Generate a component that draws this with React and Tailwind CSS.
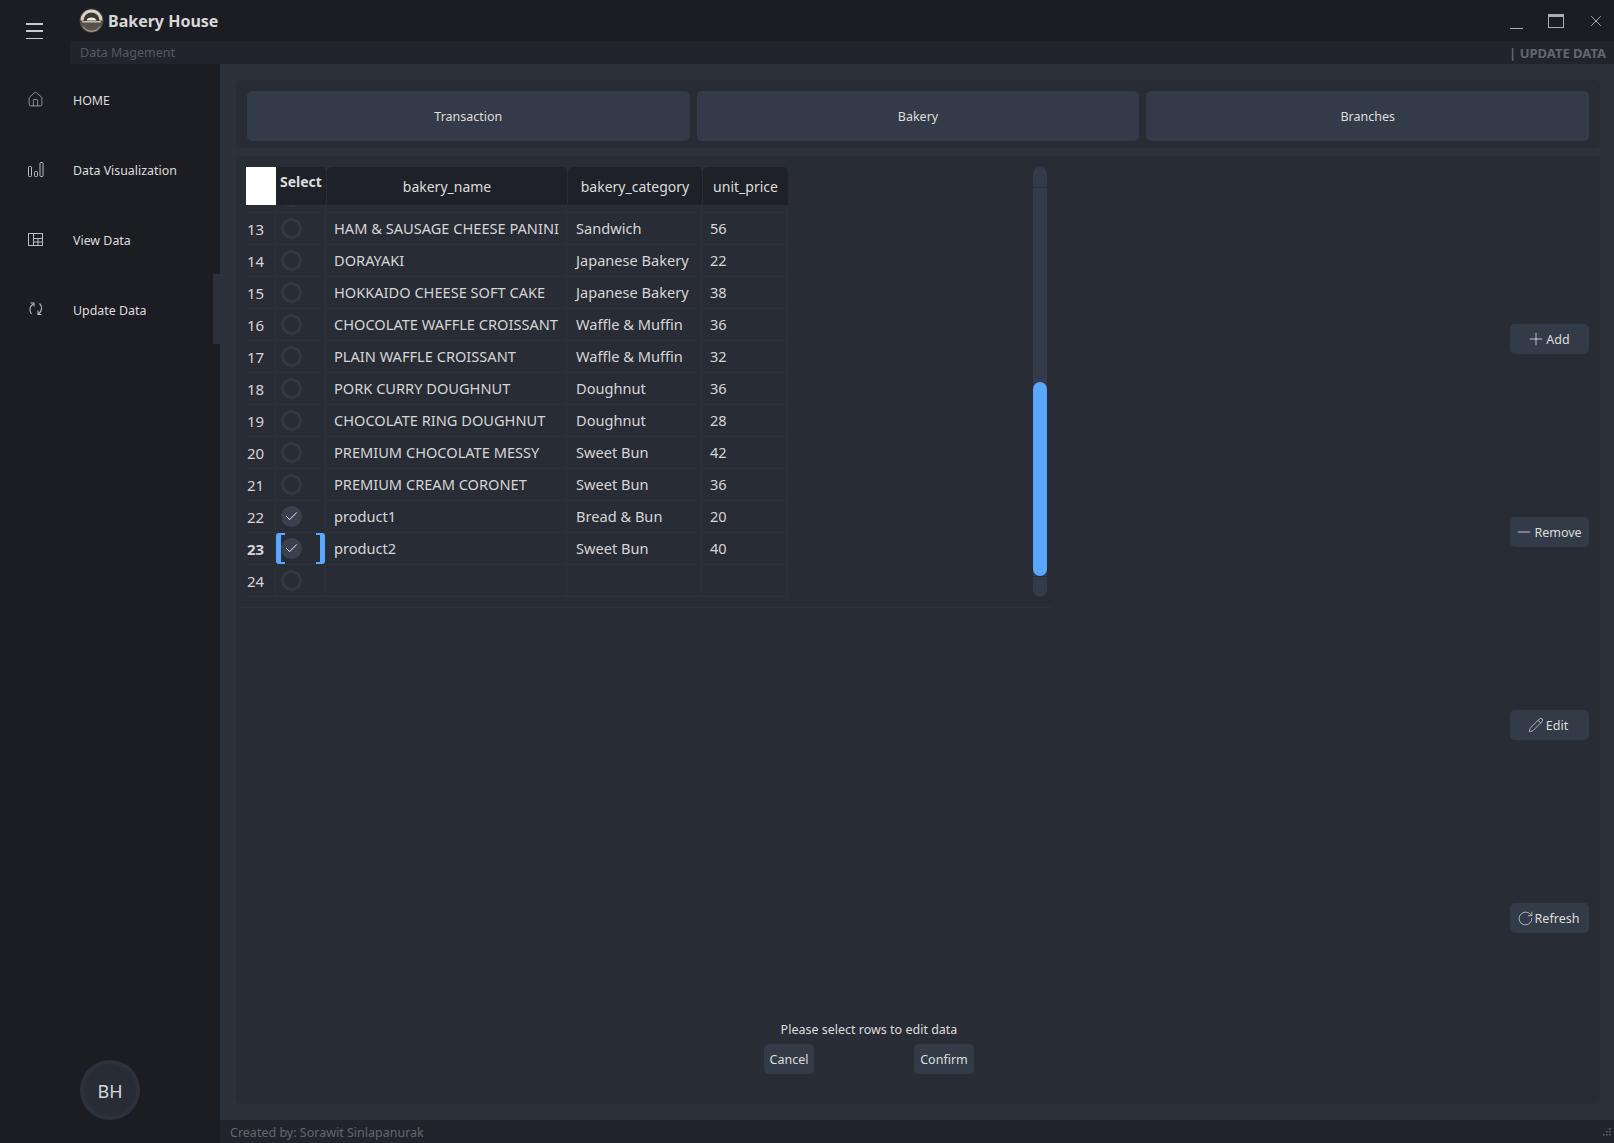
import React from 'react';
import { Home, Plus, Minus, RotateCw, Pencil, Check, X } from 'lucide-react';

const rows = [
  [13, 'HAM & SAUSAGE CHEESE PANINI', 'Sandwich', '56'],
  [14, 'DORAYAKI', 'Japanese Bakery', '22'],
  [15, 'HOKKAIDO CHEESE SOFT CAKE', 'Japanese Bakery', '38'],
  [16, 'CHOCOLATE WAFFLE CROISSANT', 'Waffle & Muffin', '36'],
  [17, 'PLAIN WAFFLE CROISSANT', 'Waffle & Muffin', '32'],
  [18, 'PORK CURRY DOUGHNUT', 'Doughnut', '36'],
  [19, 'CHOCOLATE RING DOUGHNUT', 'Doughnut', '28'],
  [20, 'PREMIUM CHOCOLATE MESSY', 'Sweet Bun', '42'],
  [21, 'PREMIUM CREAM CORONET', 'Sweet Bun', '36'],
  [22, 'product1', 'Bread & Bun', '20', true],
  [23, 'product2', 'Sweet Bun', '40', true],
  [24, '', '', ''],
];

const BarsIcon = () => (
  <svg width="17" height="17" viewBox="0 0 17 17" fill="none" stroke="currentColor" strokeWidth="1">
    <rect x="1.500" y="5.500" width="3" height="10" rx="0.800" />
    <rect x="7.500" y="10.500" width="3" height="5" rx="0.800" />
    <rect x="13" y="1.500" width="3" height="14" rx="0.800" />
  </svg>
);

const TableIcon = () => (
  <svg width="17" height="15" viewBox="0 0 17 15" fill="none" stroke="currentColor" strokeWidth="1">
    <rect x="1.500" y="1.500" width="14" height="12" />
    <path d="M6.500 1.500v12M6.500 6.500h9M11 6.500v7M6.500 10h9" />
  </svg>
);

const SyncIcon = () => (
  <svg width="17" height="14" viewBox="0 0 17 14" fill="none" stroke="currentColor" strokeWidth="1.100">
    <path d="M6.500 2C3 3.500 1.500 8 4.500 12" />
    <path d="M3.500 1h3.500v3.500" />
    <path d="M12.500 1.500c3 2.500 3 7-1 10.500" />
    <path d="M11 8.500V12.500h3.500" />
  </svg>
);

const Logo = () => (
  <svg width="25" height="25" viewBox="0 0 25 25">
    <circle cx="12.500" cy="12.500" r="12" fill="#4a453c" />
    <path d="M1.500 12.500a11 11 0 0 1 22 0h-3a8 8 0 0 0-16 0z" fill="#d8d3c8" />
    <circle cx="12.500" cy="12.500" r="7.500" fill="#3b3731" />
    <path d="M1.500 13.500h22a11 11 0 0 1-22 0z" fill="#57514a" />
    <rect x="3" y="13" width="19" height="1.500" fill="#c4bfb4" />
    <path d="M4 18.500a10 10 0 0 0 17 0" fill="none" stroke="#bdb7a9" strokeWidth="1" />
    <path d="M7.500 12.500c.8-2.400 3-3 5-3s4.200.6 5 3z" fill="#f0ece2" />
  </svg>
);

const NavItem = ({ icon, label }) => (
  <div className="flex h-[70px] items-center text-[12.400px] text-[#dddddd]">
    <div className="flex w-[73px] justify-center pr-[2px] text-[#b9bec8]">{icon}</div>
    <span className="pt-[4px]">{label}</span>
  </div>
);

const ActionButton = ({ icon, label }) => (
  <button className="flex h-[30px] w-[79px] items-center justify-center rounded-[5px] bg-[#343b48] pr-[3px] text-[12.500px] text-[#dddddd]">
    {icon}
    <span className="pt-[2px]">{label}</span>
  </button>
);

const Radio = ({ checked }) => (
  <div
    className={
      checked
        ? 'flex h-[21px] w-[21px] items-center justify-center rounded-full bg-[#3a404e]'
        : 'h-[21px] w-[21px] rounded-full border-[3px] border-[#323844]'
    }
  >
    {checked && <Check size={15} strokeWidth={1.500} className="text-white" />}
  </div>
);

const cols = 'grid grid-cols-[30px_50px_241px_135px_86px]';

export default function App() {
  return (
    <div className="flex h-[1143px] w-[1614px] flex-col overflow-hidden bg-[#1b1d23] font-['Noto_Sans',sans-serif] text-[#dddddd]">
      {/* top bar */}
      <div className="flex h-[64px] shrink-0">
        <div className="flex w-[70px] justify-center pr-[1px] pt-[23px]">
          <div className="flex h-[16px] w-[17px] flex-col justify-between">
            <div className="h-[1.500px] bg-[#c8ccd2]" />
            <div className="h-[1.500px] bg-[#c8ccd2]" />
            <div className="h-[1.500px] bg-[#c8ccd2]" />
          </div>
        </div>
        <div className="flex flex-1 flex-col">
          <div className="flex h-[41px] items-center pl-[9px]">
            <Logo />
            <span className="ml-[4px] text-[16px] font-bold text-[#d8d8d8]">Bakery House</span>
            <div className="ml-auto flex translate-x-[2px] items-center">
              <div className="flex h-[41px] w-[40px] items-end justify-center pb-[12px]">
                <div className="h-px w-[13px] bg-[#a8adb8]" />
              </div>
              <div className="flex h-[41px] w-[40px] items-center justify-center">
                <div className="h-[14px] w-[16px] border border-t-[3px] border-[#a8adb8]" />
              </div>
              <div className="flex h-[41px] w-[40px] items-center justify-center text-[#c8ccd2]">
                <X size={18} strokeWidth={1.100} />
              </div>
            </div>
          </div>
          <div className="flex h-[23px] items-center justify-between bg-[#21252b] pl-[10px] pr-[8px] pt-[2px] text-[12.500px] text-[#555a63]">
            <span>Data Magement</span>
            <span className="text-[13px] font-bold text-[#62676f]">| UPDATE DATA</span>
          </div>
        </div>
      </div>

      <div className="flex min-h-0 flex-1">
        {/* sidebar */}
        <div className="relative flex w-[220px] shrink-0 flex-col">
          <NavItem icon={<Home size={17} strokeWidth={1} />} label="HOME" />
          <NavItem icon={<BarsIcon />} label="Data Visualization" />
          <NavItem icon={<TableIcon />} label="View Data" />
          <NavItem icon={<SyncIcon />} label="Update Data" />
          <div className="absolute right-0 top-[210px] h-[70px] w-[7px] bg-[#2c313c]" />
          <div className="mb-[23px] mt-auto flex justify-center">
            <div className="flex h-[60px] w-[60px] items-center justify-center rounded-full border-[4px] border-[#2c313c] bg-[#282c34] pt-[2px] text-[18px] text-[#d5d8de]">
              BH
            </div>
          </div>
        </div>

        {/* content */}
        <div className="flex min-w-0 flex-1 flex-col">
          <div className="flex flex-1 flex-col gap-[8px] bg-[#2c313c] pb-[16px] pl-[16px] pr-[14px] pt-[16px]">
            <div className="grid h-[68px] grid-cols-3 gap-[7px] rounded-[5px] bg-[#282c34] px-[11px] pb-[7px] pt-[11px] text-[12.500px]">
              <button className="rounded-[5px] bg-[#343b48] pt-[2px]">Transaction</button>
              <button className="rounded-[5px] bg-[#343b48] pt-[2px]">Bakery</button>
              <button className="rounded-[5px] bg-[#343b48] pt-[2px]">Branches</button>
            </div>

            <div className="flex flex-1 flex-col rounded-[5px] bg-[#282c34]">
              <div className="flex flex-1">
                {/* table area */}
                <div className="flex w-[816px] shrink-0 flex-col pl-[4px] pt-[11px]">
                  <div className="flex h-[441px] border-b border-[#2d3139] pl-[6px]">
                    <div className="w-[542px] shrink-0">
                      <div className={cols + ' h-[38px] text-[14px]'}>
                        <div className="bg-white" />
                        <div className="rounded-tr-[5px] bg-[#1e2128] pl-[4px] pt-[4px] text-[14px] font-bold">Select</div>
                        <div className="ml-px flex items-center justify-center rounded-t-[5px] bg-[#1e2128]">bakery_name</div>
                        <div className="ml-px flex items-center justify-center rounded-t-[5px] bg-[#1e2128]">bakery_category</div>
                        <div className="ml-px flex items-center justify-center rounded-t-[5px] bg-[#1e2128]">unit_price</div>
                      </div>
                      {/* row 12 scrolled away, only the bottom of its radio shows */}
                      <div className={cols + ' h-[8px] overflow-hidden border-b border-[#2d3139]'}>
                        <div className="border-r border-[#2d3139]" />
                        <div className="border-r border-[#2d3139] pl-[5px]">
                          <div className="mt-[-19px]"><Radio /></div>
                        </div>
                        <div className="border-r border-[#2d3139]" />
                        <div className="border-r border-[#2d3139]" />
                        <div className="border-r border-[#2d3139]" />
                      </div>
                      {rows.map((r) => (
                        <div key={r[0]} className={cols + ' h-[32px] border-b border-[#2d3139] text-[14.600px] text-[#d6d6d6]'}>
                          <div className={'flex items-center border-r border-[#2d3139] pl-px pt-[2px] text-[15px] ' + (r[0] === 23 ? 'font-bold' : '')}>
                            {r[0]}
                          </div>
                          <div className="relative flex items-center border-r border-[#2d3139] pl-[5px]">
                            <Radio checked={r[4]} />
                            {r[0] === 23 && (
                              <>
                                <span className="absolute inset-y-0 left-0 w-[9px] rounded-l-[3px] border-y-2 border-l-[5px] border-[#5aa7ff]" />
                                <span className="absolute inset-y-0 right-0 w-[9px] rounded-r-[3px] border-y-2 border-r-[5px] border-[#5aa7ff]" />
                              </>
                            )}
                          </div>
                          <div className="flex items-center whitespace-nowrap border-r border-[#2d3139] pl-[8px]">{r[1]}</div>
                          <div className="flex items-center whitespace-nowrap border-r border-[#2d3139] pl-[9px]">{r[2]}</div>
                          <div className="flex items-center border-r border-[#2d3139] pl-[8px]">{r[3]}</div>
                        </div>
                      ))}
                    </div>
                  </div>
                </div>

                {/* scrollbar */}
                <div className="-ml-[19px] pt-[11px]">
                  <div className="relative h-[430px] w-[14px] overflow-hidden rounded-[7px] bg-[#343b48]">
                    <div className="absolute left-0 top-[20px] h-px w-full bg-[#282c34]" />
                    <div className="absolute left-0 top-[215px] h-[194px] w-full rounded-[7px] bg-[#5aa7ff]" />
                    <div className="absolute bottom-[20px] left-0 h-px w-full bg-[#282c34]" />
                  </div>
                </div>

                {/* actions */}
                <div className="ml-auto flex flex-col gap-[163px] pr-[11px] pt-[168px]">
                  <ActionButton icon={<Plus size={20} strokeWidth={1} />} label="Add" />
                  <ActionButton icon={<Minus size={20} strokeWidth={1} />} label="Remove" />
                  <ActionButton icon={<Pencil size={16} strokeWidth={1.100} className="mr-[2px]" />} label="Edit" />
                  <ActionButton icon={<RotateCw size={17} strokeWidth={1} className="mr-[1px]" />} label="Refresh" />
                </div>
              </div>

              <div className="flex flex-col items-center pb-[30px] pr-[98px] text-[12.500px]">
                <div className="mb-[5px] h-[20px] pt-[2px]">Please select rows to edit data</div>
                <div className="flex gap-[100px]">
                  <button className="h-[30px] w-[50px] rounded-[5px] bg-[#343b48] pt-[2px]">Cancel</button>
                  <button className="h-[30px] w-[60px] rounded-[5px] bg-[#343b48] pt-[2px]">Confirm</button>
                </div>
              </div>
            </div>
          </div>

          {/* footer */}
          <div className="flex h-[23px] shrink-0 items-center justify-between bg-[#21252b] pl-[10px] pr-[3px] pt-[3px] text-[12.500px] text-[#62676f]">
            <span>Created by: Sorawit Sinlapanurak</span>
            <svg width="10" height="10" viewBox="0 0 10 10" fill="#62676f">
              <rect x="8" y="0" width="1.500" height="1.500" />
              <rect x="5" y="3" width="1.500" height="1.500" />
              <rect x="8" y="3" width="1.500" height="1.500" />
              <rect x="2" y="6" width="1.500" height="1.500" />
              <rect x="5" y="6" width="1.500" height="1.500" />
              <rect x="8" y="6" width="1.500" height="1.500" />
            </svg>
          </div>
        </div>
      </div>
    </div>
  );
}
